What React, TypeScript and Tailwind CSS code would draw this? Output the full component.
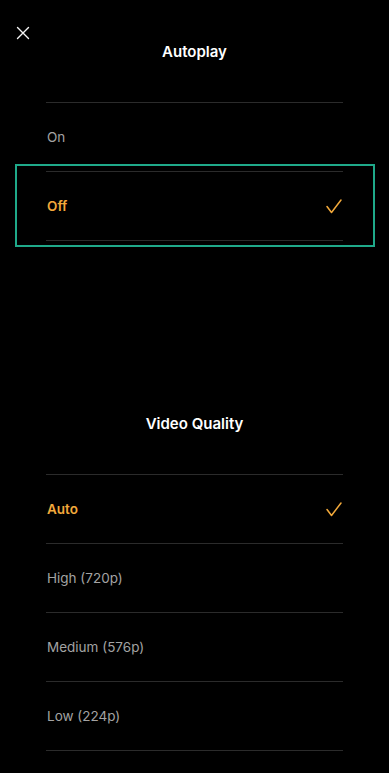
import React from "react";

const AUTOPLAY = [
  { label: "On", selected: false },
  { label: "Off", selected: true },
];

const QUALITY = [
  { label: "Auto", selected: true },
  { label: "High (720p)", selected: false },
  { label: "Medium (576p)", selected: false },
  { label: "Low (224p)", selected: false },
];

function Check() {
  return (
    <svg width="16" height="15" viewBox="0 0 16 15" fill="none">
      <path d="M1 7.5 L5.5 13.5 L15 1" stroke="#f2a93b" strokeWidth="1.5" strokeLinecap="round" strokeLinejoin="round" />
    </svg>
  );
}

function Row({ label, selected }: { label: string; selected: boolean }) {
  return (
    <div className="flex h-[69px] items-center justify-between border-b border-[#2b2b2b] pl-[1px] pr-[1px]">
      <span
        className={
          selected
            ? "pt-[1px] text-[13.5px] font-semibold text-[#f2a93b]"
            : "pt-[1px] text-[13.5px] text-[#a3a3a3]"
        }
      >
        {label}
      </span>
      {selected && <Check />}
    </div>
  );
}

export default function App() {
  return (
    <div className="min-h-[773px] w-full bg-black text-white" style={{ fontFamily: "Inter, sans-serif" }}>
      <div className="relative">
        <button className="absolute left-[16px] top-[26px] p-0">
          <svg width="14" height="14" viewBox="0 0 14 14" fill="none">
            <path d="M1.5 1.5 L12.5 12.5 M12.5 1.5 L1.5 12.5" stroke="#f5f5f5" strokeWidth="1.4" strokeLinecap="round" />
          </svg>
        </button>
      </div>

      <div className="pt-[41px] text-center text-[15px] font-semibold leading-[22px]">Autoplay</div>
      <div className="mx-[46px] mt-[39px] border-t border-[#2b2b2b]">
        <Row {...AUTOPLAY[0]} />
        <div className="relative">
          <div className="pointer-events-none absolute -left-[31px] -right-[32px] -top-[8px] bottom-[-6px] border-[2.5px] border-[#1fa98a]" />
          <Row {...AUTOPLAY[1]} />
        </div>
      </div>

      <div className="mt-[172px] text-center text-[15px] font-semibold leading-[22px]">Video Quality</div>
      <div className="mx-[46px] mt-[39px] border-t border-[#2b2b2b]">
        {QUALITY.map((q) => (
          <Row key={q.label} {...q} />
        ))}
      </div>
    </div>
  );
}
